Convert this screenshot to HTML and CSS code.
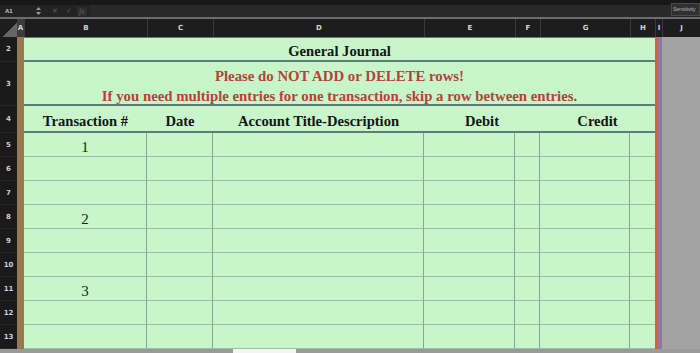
FILE: index.html
```html
<!DOCTYPE html>
<html lang="en">
<head>
   <meta charset="UTF-8">
   <meta name="viewport" content="width=device-width, initial-scale=1.0">
   <title>General Journal</title>
   <link rel="stylesheet" href="styles.css">
</head>
<body class="body">
   <div class="topbar"></div>
   <div class="formula-bar">
      <div class="name-box">A1</div>
      <div class="stepper">
         <svg width="5" height="8" viewBox="0 0 5 8"><path d="M2.5 0 L5 3 L0 3 Z M0 5 L5 5 L2.5 8 Z" fill="#9a9a9a"/></svg>
      </div>
      <div class="tool">&#x2715;</div>
      <div class="tool">&#x2713;</div>
      <div class="tool fx">fx</div>
      <div class="formula-input"></div>
      <div class="sensitivity">Sensitivity</div>
   </div>

   <div class="sheet">
      <!-- column headers -->
      <div class="corner"></div>
      <div class="col-head col-head-a">A</div>
      <div class="col-head">B</div>
      <div class="col-head">C</div>
      <div class="col-head">D</div>
      <div class="col-head">E</div>
      <div class="col-head">F</div>
      <div class="col-head">G</div>
      <div class="col-head">H</div>
      <div class="col-head">I</div>
      <div class="col-head">J</div>

      <!-- row 2 -->
      <div class="row-head">2</div>
      <div class="col-a"></div>
      <div class="title">General Journal</div>
      <div class="col-i"></div>
      <div class="col-j"></div>

      <!-- row 3 -->
      <div class="row-head">3</div>
      <div class="col-a"></div>
      <div class="notice">
         <div>Please do NOT ADD or DELETE rows!</div>
         <div>If you need multiple entries for one transaction, skip a row between entries.</div>
      </div>
      <div class="col-i"></div>
      <div class="col-j"></div>

      <!-- row 4 -->
      <div class="row-head">4</div>
      <div class="col-a"></div>
      <div class="th">Transaction #</div>
      <div class="th">Date</div>
      <div class="th">Account Title-Description</div>
      <div class="th span-2">Debit</div>
      <div class="th span-2">Credit</div>
      <div class="col-i"></div>
      <div class="col-j"></div>

      <!-- rows 5 - 13 -->
      <div class="row-head">5</div><div class="col-a"></div>
      <div class="cell num">1</div><div class="cell"></div><div class="cell"></div><div class="cell"></div><div class="cell"></div><div class="cell"></div><div class="cell last"></div>
      <div class="col-i"></div><div class="col-j"></div>

      <div class="row-head">6</div><div class="col-a"></div>
      <div class="cell"></div><div class="cell"></div><div class="cell"></div><div class="cell"></div><div class="cell"></div><div class="cell"></div><div class="cell last"></div>
      <div class="col-i"></div><div class="col-j"></div>

      <div class="row-head">7</div><div class="col-a"></div>
      <div class="cell"></div><div class="cell"></div><div class="cell"></div><div class="cell"></div><div class="cell"></div><div class="cell"></div><div class="cell last"></div>
      <div class="col-i"></div><div class="col-j"></div>

      <div class="row-head">8</div><div class="col-a"></div>
      <div class="cell num">2</div><div class="cell"></div><div class="cell"></div><div class="cell"></div><div class="cell"></div><div class="cell"></div><div class="cell last"></div>
      <div class="col-i"></div><div class="col-j"></div>

      <div class="row-head">9</div><div class="col-a"></div>
      <div class="cell"></div><div class="cell"></div><div class="cell"></div><div class="cell"></div><div class="cell"></div><div class="cell"></div><div class="cell last"></div>
      <div class="col-i"></div><div class="col-j"></div>

      <div class="row-head">10</div><div class="col-a"></div>
      <div class="cell"></div><div class="cell"></div><div class="cell"></div><div class="cell"></div><div class="cell"></div><div class="cell"></div><div class="cell last"></div>
      <div class="col-i"></div><div class="col-j"></div>

      <div class="row-head">11</div><div class="col-a"></div>
      <div class="cell num">3</div><div class="cell"></div><div class="cell"></div><div class="cell"></div><div class="cell"></div><div class="cell"></div><div class="cell last"></div>
      <div class="col-i"></div><div class="col-j"></div>

      <div class="row-head">12</div><div class="col-a"></div>
      <div class="cell"></div><div class="cell"></div><div class="cell"></div><div class="cell"></div><div class="cell"></div><div class="cell"></div><div class="cell last"></div>
      <div class="col-i"></div><div class="col-j"></div>

      <div class="row-head">13</div><div class="col-a"></div>
      <div class="cell"></div><div class="cell"></div><div class="cell"></div><div class="cell"></div><div class="cell"></div><div class="cell"></div><div class="cell last"></div>
      <div class="col-i"></div><div class="col-j"></div>
   </div>

   <div class="hscroll"><div class="thumb"></div></div>
</body>
</html>
```

FILE: styles.css
```css
:root {
   --cell-green: #c8f6ca;
   --grid-thin: #9fbea7;
   --grid-vert: #86a691;
   --grid-thick: #5b7f74;
   --header-dark: #1d1d1d;
   --text-red: #b3433a;
}

.body { margin: 0; width: 700px; height: 353px; overflow: hidden; background-color: #1c1c1c; font-family: "Liberation Sans", Arial, sans-serif; }

/* toolbar + formula bar */
.topbar { height: 5px; background-color: #181818; }
.formula-bar { display: flex; align-items: center; height: 12px; background-color: #232323; border-bottom: 2px solid #6c6c6c; color: #c8c8c8; font-size: 6px; }
.name-box { width: 31px; padding-left: 5px; font-weight: bold; }
.stepper { display: flex; align-items: center; width: 12px; }
.tool { width: 14px; color: #5e5e5e; font-size: 7px; text-align: center; }
.tool.fx { width: 10px; margin-left: 1px; font-family: "Liberation Serif", serif; font-style: italic; font-size: 8px; background-color: #2c2c2c; }
.formula-input { flex: 1; align-self: stretch; margin-left: 3px; background-color: #292929; }
.sensitivity { align-self: flex-start; width: 26px; height: 11px; margin-top: -2px; border: 1px solid #4a4a4a; background-color: #303030; color: #b8b8b8; font-size: 5px; line-height: 11px; padding-left: 1px; overflow: hidden; white-space: nowrap; }

/* spreadsheet grid */
.sheet { display: grid; grid-template-columns: 17px 7px 123px 66px 211px 91px 25px 90px 25px 7px 38px; grid-template-rows: 18px 25px 44px 27px repeat(9, 24px); }

.corner { background: linear-gradient(to bottom right, transparent 50%, #666666 50%) no-repeat right bottom / 14px 15px, var(--header-dark); }
.col-head { display: flex; align-items: center; justify-content: center; background-color: var(--header-dark); border-left: 1px solid #3a3a3a; color: #d6d6d6; font: bold 7px "DejaVu Sans", sans-serif; }
.col-head-a { background-color: #3c3c3c; border-left: none; }

.row-head { display: flex; align-items: center; justify-content: center; background-color: #1a1a1a; border-bottom: 1px solid #262626; color: #cfcfcf; font: bold 7px "DejaVu Sans", sans-serif; }

.col-a { background-color: #97784f; }
.col-i { background: linear-gradient(to right, #c8673c 0 3px, #8d77a8 3px); }
.col-j { background-color: #a3a3a3; }

.title { grid-column: span 7; display: flex; align-items: center; justify-content: center; padding-top: 4px; background-color: var(--cell-green); border-top: 1px solid var(--grid-thick); border-bottom: 2px solid var(--grid-thick); color: #141414; font: bold 14.6px "Liberation Serif", "Times New Roman", serif; }
.notice { grid-column: span 7; display: flex; flex-direction: column; align-items: center; justify-content: center; padding-top: 5px; background-color: var(--cell-green); border-bottom: 2px solid var(--grid-thick); color: var(--text-red); font: bold 14.8px/20px "Liberation Serif", "Times New Roman", serif; }
.th { display: flex; align-items: center; justify-content: center; padding-top: 6px; background-color: var(--cell-green); border-bottom: 2px solid var(--grid-thick); color: #141414; font: bold 14.6px "Liberation Serif", "Times New Roman", serif; white-space: nowrap; }
.span-2 { grid-column: span 2; }

.cell { background-color: var(--cell-green); border-right: 1px solid var(--grid-vert); border-bottom: 1px solid var(--grid-thin); }
.cell.last { border-right: none; }
.num { display: flex; align-items: center; justify-content: center; padding-top: 6px; color: #1e1e1e; font: 15px "Liberation Serif", "Times New Roman", serif; }

/* horizontal scroll strip */
.hscroll { display: flex; align-items: flex-end; height: 4px; padding-left: 233px; background-color: #9a9a9a; }
.hscroll .thumb { width: 63px; height: 4px; background-color: #f4f4f4; }
```
